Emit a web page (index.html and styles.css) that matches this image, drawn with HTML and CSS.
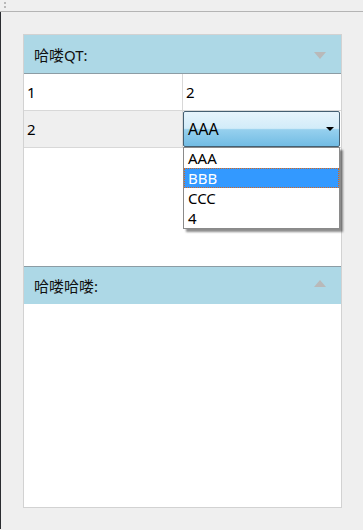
FILE: index.html
```html
<!DOCTYPE html>
<html lang="zh">
<head>
  <meta charset="UTF-8">
  <title>哈喽QT</title>
  <link rel="stylesheet" href="styles.css">
</head>
<body>

  <div class="toolbar">
    <span class="grip"></span>
    <span class="grip"></span>
  </div>

  <div class="main">
    <div class="panel">

      <div class="section-head">
        <span>哈喽QT:</span>
        <span class="arrow down"></span>
      </div>

      <div class="table">
        <div class="cell">1</div>
        <div class="cell">2</div>
        <div class="cell alt">2</div>
        <div class="cell combo-cell">
          <div class="combo">
            <span>AAA</span>
            <span class="combo-arrow"></span>
          </div>
          <ul class="popup">
            <li>AAA</li>
            <li class="selected">BBB</li>
            <li>CCC</li>
            <li>4</li>
          </ul>
        </div>
      </div>

      <div class="spacer"></div>

      <div class="section-head second">
        <span>哈喽哈喽:</span>
        <span class="arrow up"></span>
      </div>

      <div class="section-body"></div>
    </div>
  </div>

</body>
</html>
```

FILE: styles.css
```css
body {
  margin: 0;
  background: #efefef;
  font-family: "Noto Sans", "Noto Sans CJK SC", sans-serif;
  font-size: 14px;
  color: #000;
  height: 530px;
  overflow: hidden;
}
.toolbar {
  height: 12px;
  border-bottom: 1px solid #b4b4b4;
  padding: 2px 0 0 4px;
  box-sizing: border-box;
  display: flex;
  flex-direction: column;
  gap: 2px;
}
.grip {
  width: 2px;
  height: 2px;
  background: #b8b8b8;
}
.main {
  border-left: 1px solid #2a2c30;
  height: 517px;
  padding: 22px 0 0 22px;
  box-sizing: border-box;
}
.panel {
  width: 319px;
  height: 474px;
  box-sizing: border-box;
  border: 1px solid #d2d2d2;
  background: #fff;
  display: flex;
  flex-direction: column;
}
.section-head {
  height: 38px;
  background: #add8e6;
  border-bottom: 1px solid #8c9ca4;
  display: flex;
  align-items: center;
  justify-content: space-between;
  padding: 0 15px 0 10px;
  font-size: 15px;
  color: #111;
  flex-shrink: 0;
}
.section-head.second {
  border-top: 1px solid #8c9ca4;
  border-bottom: none;
  height: 37px;
}
.arrow {
  width: 0;
  height: 0;
  border-left: 6px solid transparent;
  border-right: 6px solid transparent;
}
.arrow.down {
  border-top: 7px solid #b9b9b9;
  margin-top: 2px;
}
.arrow.up {
  border-bottom: 7px solid #b9b9b9;
  margin-top: -4px;
}
.table {
  display: grid;
  grid-template-columns: 159px 1fr;
  grid-auto-rows: 37px;
}
.cell {
  border-bottom: 1px solid #d8d8d8;
  display: flex;
  align-items: center;
  padding-left: 3px;
  font-size: 15px;
}
.cell:nth-child(odd) {
  border-right: 1px solid #d8d8d8;
}
.cell.alt {
  background: #efefef;
}
.combo-cell {
  position: relative;
  padding: 0;
  align-items: stretch;
}
.combo {
  flex: 1;
  margin-right: 1px;
  border: 1px solid #445f72;
  border-radius: 2px;
  background: linear-gradient(#e6f4fc, #d2ecf9 48%, #96d0ee 52%, #72bce4);
  display: flex;
  align-items: center;
  justify-content: space-between;
  padding: 0 5px 0 4px;
  font-size: 16px;
}
.combo-arrow {
  width: 0;
  height: 0;
  border-left: 4px solid transparent;
  border-right: 4px solid transparent;
  border-top: 4px solid #000;
}
.popup {
  position: absolute;
  top: 36px;
  left: 0;
  width: 157px;
  margin: 0;
  padding: 0;
  list-style: none;
  background: #fff;
  border: 1px solid #8a8a8a;
  box-sizing: border-box;
  box-shadow: 3px 3px 2px rgba(0, 0, 0, 0.45);
  font-size: 15px;
  z-index: 2;
}
.popup li {
  height: 20px;
  line-height: 19px;
  padding-left: 3px;
  border: 1px dotted transparent;
  box-sizing: border-box;
}
.popup li.selected {
  background: #3399ff;
  color: #fff;
  border-color: #d8661c;
}
.spacer {
  height: 118px;
  flex-shrink: 0;
}
.section-body {
  flex: 1;
}
```
